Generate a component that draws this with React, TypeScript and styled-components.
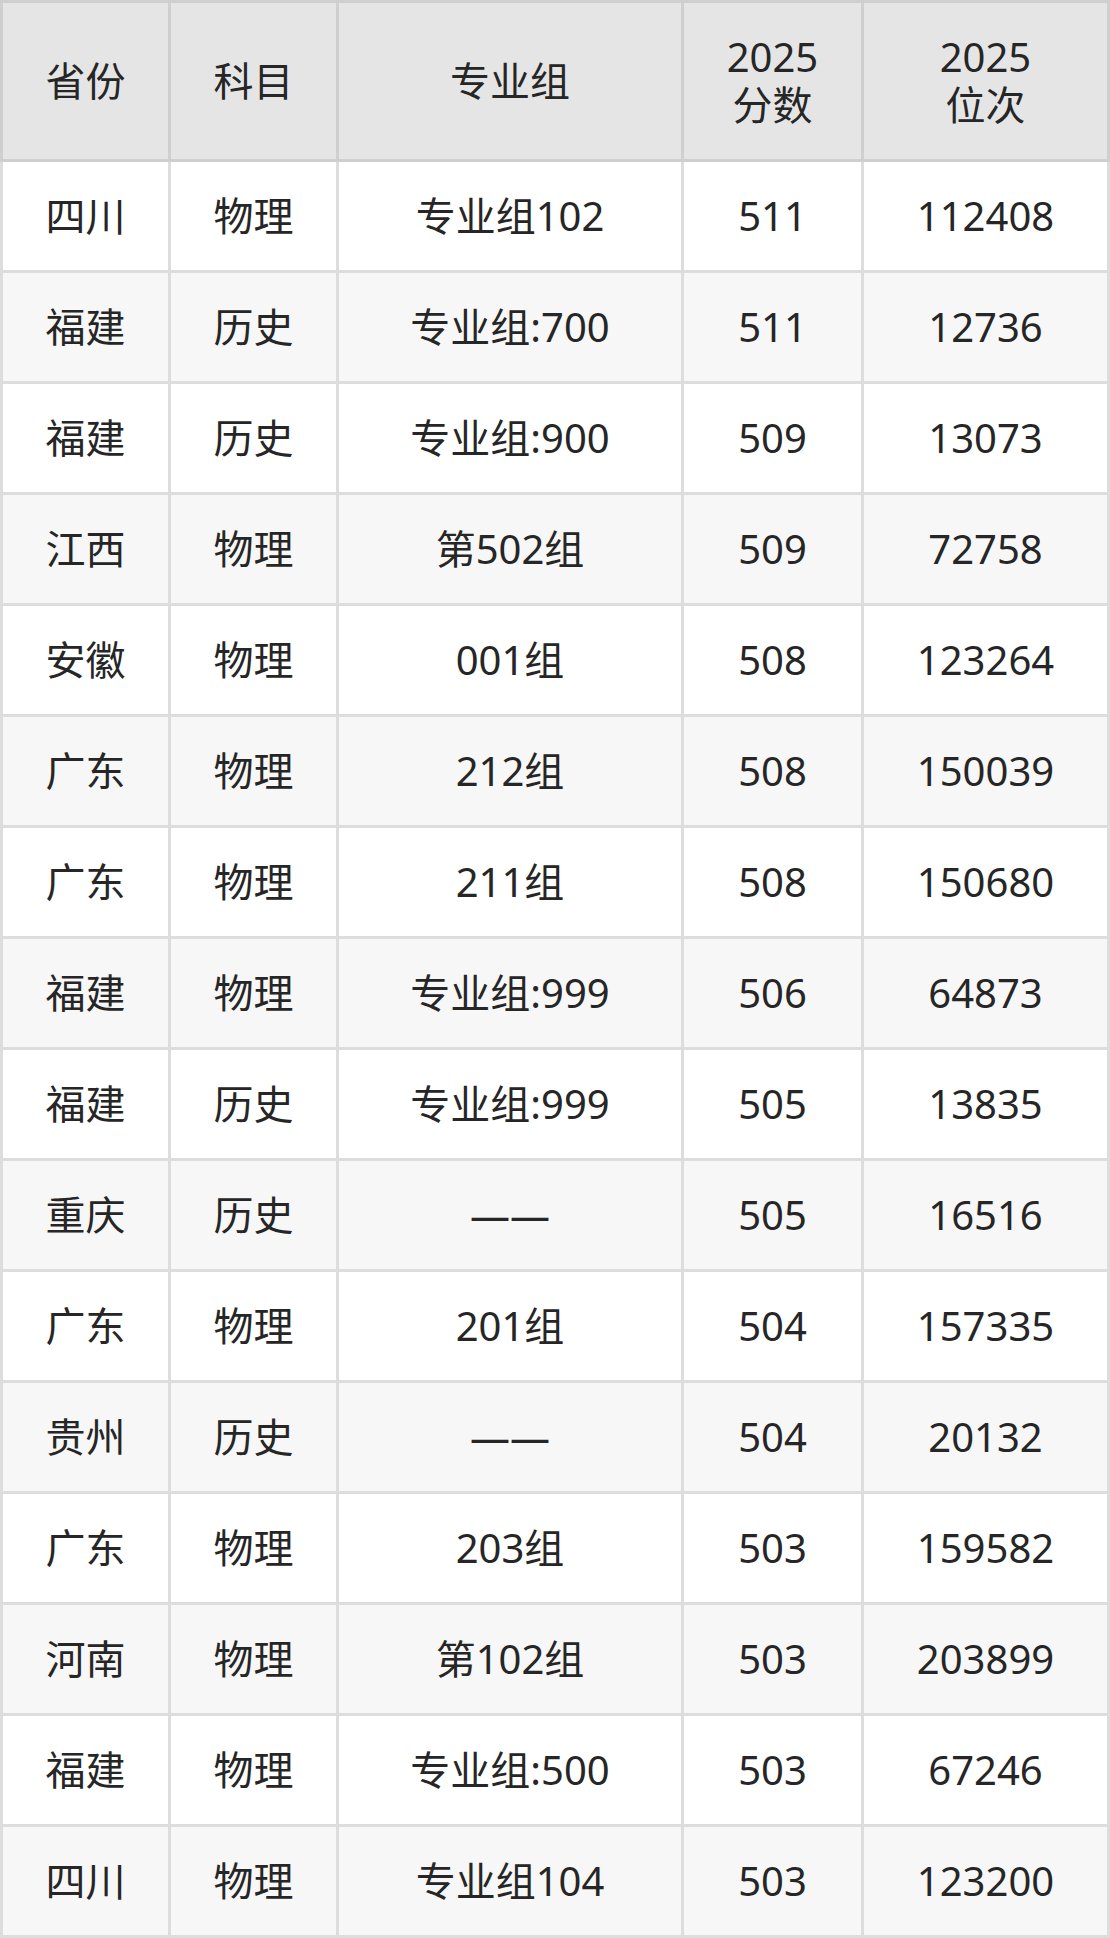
import React from "react";
import styled, { createGlobalStyle } from "styled-components";

const GlobalStyle = createGlobalStyle`
  html, body {
    margin: 0;
    padding: 0;
    background: #ffffff;
  }
  body {
    font-family: "Noto Sans", "Noto Sans CJK SC", sans-serif;
    color: #262626;
  }
`;

const COLUMNS = "165px 165px 342px 177px 243px";

const Table = styled.div`
  width: 1110px;
  display: flex;
  flex-direction: column;
`;

const HeaderRow = styled.div`
  display: grid;
  grid-template-columns: ${COLUMNS};
  gap: 3px;
  padding: 3px;
  background: #cfcfcf;
`;

const HeaderCell = styled.div`
  height: 156px;
  background: #e5e5e5;
  display: flex;
  align-items: center;
  justify-content: center;
  text-align: center;
  font-size: 40px;
  line-height: 48px;
  white-space: pre-line;
`;

const Row = styled.div`
  display: grid;
  grid-template-columns: ${COLUMNS};
  gap: 3px;
  padding: 0 3px 3px;
  background: #dddddd;
`;

const Cell = styled.div<{ $striped: boolean }>`
  height: 108px;
  background: ${(p) => (p.$striped ? "#f7f7f7" : "#ffffff")};
  display: flex;
  align-items: center;
  justify-content: center;
  font-size: 40px;
  line-height: 48px;
  white-space: nowrap;
`;

const headers = ["省份", "科目", "专业组", "2025\n分数", "2025\n位次"];

const rows: string[][] = [
  ["四川", "物理", "专业组102", "511", "112408"],
  ["福建", "历史", "专业组:700", "511", "12736"],
  ["福建", "历史", "专业组:900", "509", "13073"],
  ["江西", "物理", "第502组", "509", "72758"],
  ["安徽", "物理", "001组", "508", "123264"],
  ["广东", "物理", "212组", "508", "150039"],
  ["广东", "物理", "211组", "508", "150680"],
  ["福建", "物理", "专业组:999", "506", "64873"],
  ["福建", "历史", "专业组:999", "505", "13835"],
  ["重庆", "历史", "——", "505", "16516"],
  ["广东", "物理", "201组", "504", "157335"],
  ["贵州", "历史", "——", "504", "20132"],
  ["广东", "物理", "203组", "503", "159582"],
  ["河南", "物理", "第102组", "503", "203899"],
  ["福建", "物理", "专业组:500", "503", "67246"],
  ["四川", "物理", "专业组104", "503", "123200"],
];

export default function App() {
  return (
    <>
      <GlobalStyle />
      <Table>
        <HeaderRow>
          {headers.map((h) => (
            <HeaderCell key={h}>{h}</HeaderCell>
          ))}
        </HeaderRow>
        {rows.map((r, i) => (
          <Row key={i}>
            {r.map((c, j) => (
              <Cell key={j} $striped={i % 2 === 1}>
                {c}
              </Cell>
            ))}
          </Row>
        ))}
      </Table>
    </>
  );
}
